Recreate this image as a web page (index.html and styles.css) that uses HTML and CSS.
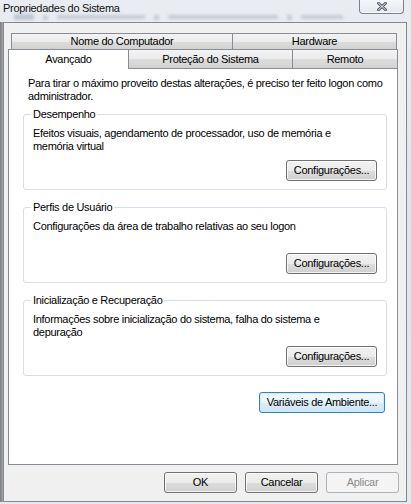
FILE: index.html
```html
<!DOCTYPE html>
<html lang="pt-BR">
<head>
<meta charset="utf-8">
<title>Propriedades do Sistema</title>
<link rel="stylesheet" href="styles.css">
</head>
<body>
<div class="window">
  <div class="glass-behind" aria-hidden="true">
    <span class="smudge s-icon"></span>
    <span class="smudge s-arrow"></span>
    <span class="smudge s-text1"></span>
    <span class="smudge s-arrow"></span>
    <span class="smudge s-text2"></span>
    <span class="smudge s-arrow"></span>
    <span class="smudge s-text3"></span>
  </div>
  <div class="titlebar">
    <span class="title">Propriedades do Sistema</span>
    <button class="close" type="button" aria-label="Fechar">
      <svg width="10" height="9" viewBox="0 0 10 9">
        <path d="M1.5 1.2 L8.5 7.8 M8.5 1.2 L1.5 7.8" stroke="#4f5660" stroke-width="2.8" stroke-linecap="round" fill="none"/>
        <path d="M1.5 1.2 L8.5 7.8 M8.5 1.2 L1.5 7.8" stroke="#f4f6f8" stroke-width="1" stroke-linecap="round" fill="none"/>
      </svg>
    </button>
  </div>
  <div class="frame">
    <div class="client">
      <div class="tabs">
        <div class="tab-row row1">
          <div class="tab tab-nome">Nome do Computador</div>
          <div class="tab tab-hw">Hardware</div>
        </div>
        <div class="tab-row row2">
          <div class="tab selected tab-av">Avançado</div>
          <div class="tab tab-prot">Proteção do Sistema</div>
          <div class="tab tab-rem">Remoto</div>
        </div>
      </div>
      <div class="panel">
        <p class="intro">Para tirar o máximo proveito destas alterações, é preciso ter feito logon como<br>administrador.</p>

        <fieldset class="group group-first">
          <legend>Desempenho</legend>
          <p class="group-text">Efeitos visuais, agendamento de processador, uso de memória e<br>memória virtual</p>
          <div class="group-actions"><button class="btn btn-cfg" type="button">Configurações...</button></div>
        </fieldset>

        <fieldset class="group">
          <legend>Perfis de Usuário</legend>
          <p class="group-text">Configurações da área de trabalho relativas ao seu logon</p>
          <div class="group-actions"><button class="btn btn-cfg" type="button">Configurações...</button></div>
        </fieldset>

        <fieldset class="group">
          <legend>Inicialização e Recuperação</legend>
          <p class="group-text">Informações sobre inicialização do sistema, falha do sistema e<br>depuração</p>
          <div class="group-actions"><button class="btn btn-cfg" type="button">Configurações...</button></div>
        </fieldset>

        <div class="env-row"><button class="btn btn-env btn-default" type="button">Variáveis de Ambiente...</button></div>
      </div>
      <div class="dialog-buttons">
        <button class="btn btn-dlg" type="button">OK</button>
        <button class="btn btn-dlg" type="button">Cancelar</button>
        <button class="btn btn-dlg btn-disabled" type="button" disabled>Aplicar</button>
      </div>
    </div>
  </div>
</div>
</body>
</html>
```

FILE: styles.css
```css
* { box-sizing: border-box; }

html, body {
  margin: 0;
  padding: 0;
}

body {
  width: 411px;
  height: 504px;
  overflow: hidden;
  font-family: "Liberation Sans", Arial, sans-serif;
  font-size: 11px;
  letter-spacing: -0.3px;
  color: #000;
  background: linear-gradient(#e9edf1, #dfe5eb 40%, #e4e9ee);
}

.window {
  position: relative;
  width: 411px;
  height: 504px;
}

/* faint blurred shapes seen through the glass frame (decorative background) */
.glass-behind {
  position: absolute;
  top: 14px;
  left: 14px;
  display: flex;
  gap: 9px;
  align-items: center;
  filter: blur(1.4px);
}
.smudge {
  display: block;
  height: 4px;
  background: rgba(80, 92, 110, 0.22);
}
.s-icon { width: 20px; height: 6px; background: rgba(70, 95, 130, 0.25); }
.s-arrow { width: 5px; height: 5px; }
.s-text1 { width: 88px; }
.s-text2 { width: 110px; }
.s-text3 { width: 42px; }

.titlebar {
  position: relative;
  height: 22px;
  display: flex;
  align-items: flex-start;
  padding-left: 3px;
}

.title {
  margin-top: 2px;
  line-height: 13px;
  font-size: 11px;
  color: #111;
}

.close {
  margin-left: auto;
  margin-right: 7px;
  width: 45px;
  height: 14px;
  padding: 2px 0 0;
  display: flex;
  justify-content: center;
  align-items: flex-start;
  border: 1px solid #7a828c;
  border-top: none;
  border-radius: 0 0 4px 4px;
  background: linear-gradient(rgba(255,255,255,0.55), rgba(225,231,238,0.6));
  box-shadow: inset 0 -1px 0 rgba(255,255,255,0.7);
}

.frame {
  height: 482px;
  padding-left: 3px;
  background: linear-gradient(to right, #7b7d80 0, #a3a6a9 3px, transparent 3px) no-repeat;
  background-size: 3px 480px;
}

.client {
  width: 404px;
  height: 480px;
  border: 1px solid #858a91;
  background: #f0f0f0;
  padding: 10px 0 0 4px;
}

/* ---------- tabs ---------- */
.tabs {
  width: 390px;
}

.tab-row {
  display: flex;
}

.tab {
  border: 1px solid #898c95;
  border-bottom: none;
  text-align: center;
  white-space: nowrap;
  background: linear-gradient(#f3f3f3 0%, #ebebeb 50%, #dddddd 51%, #d2d2d2 100%);
}
.tab + .tab { margin-left: -1px; }

.row1 { margin-left: 3px; }
.row1 .tab {
  height: 16px;
  line-height: 15px;
}
.tab-nome { width: 222px; }
.tab-hw { width: 165px; }

.row2 .tab {
  height: 19px;
  line-height: 18px;
}
.tab-av { width: 121px; }
.tab-prot { width: 165px; }
.tab-rem { width: 106px; }

.tab.selected {
  position: relative;
  z-index: 1;
  height: 20px;
  margin-bottom: -1px;
  background: #fff;
}

/* ---------- panel ---------- */
.panel {
  width: 390px;
  height: 397px;
  border: 1px solid #898c95;
  background: #fff;
  padding: 8px 0 0 14px;
}

.intro {
  margin: 0;
  padding-left: 5px;
  line-height: 13px;
}

.group {
  width: 364px;
  margin: 11px 0 0;
  padding: 0 9px 8px 9px;
  border: 1px solid #d5dfe5;
  border-radius: 3px;
  min-inline-size: 0;
}
.group-first { margin-top: 5px; }

.group legend {
  padding: 0 2px;
  margin-left: -2px;
  line-height: 13px;
  color: #000;
}

.group-text {
  margin: 6px 0 0;
  line-height: 13px;
  height: 26px;
}

.group-actions {
  display: flex;
  justify-content: flex-end;
  margin-top: 7px;
}

/* ---------- buttons ---------- */
.btn {
  font: inherit;
  letter-spacing: inherit;
  color: #000;
  height: 21px;
  padding: 0;
  border: 1px solid #707070;
  border-radius: 3px;
  background: linear-gradient(#f2f2f2 0%, #ebebeb 50%, #dddddd 51%, #cfcfcf 100%);
  box-shadow: inset 0 0 0 1px rgba(255, 255, 255, 0.75);
  line-height: 19px;
  white-space: nowrap;
}

.btn-cfg { width: 91px; }

.env-row {
  display: flex;
  justify-content: flex-end;
  padding-right: 12px;
  margin-top: 16px;
}
.btn-env { width: 126px; }

.btn-default {
  border-color: #3c7fb1;
  background: linear-gradient(#f1f8fd 0%, #e9f4fb 50%, #dbedf8 51%, #cde5f4 100%);
  box-shadow: inset 0 0 0 1px rgba(200, 235, 252, 0.9);
}

.dialog-buttons {
  display: flex;
  justify-content: flex-end;
  gap: 8px;
  margin-top: 7px;
  padding-right: 7px;
}
.btn-dlg { width: 73px; }

.btn-disabled {
  color: #8b8b8b;
  border-color: #adb2b5;
  background: #f4f4f4;
  box-shadow: none;
}
```
